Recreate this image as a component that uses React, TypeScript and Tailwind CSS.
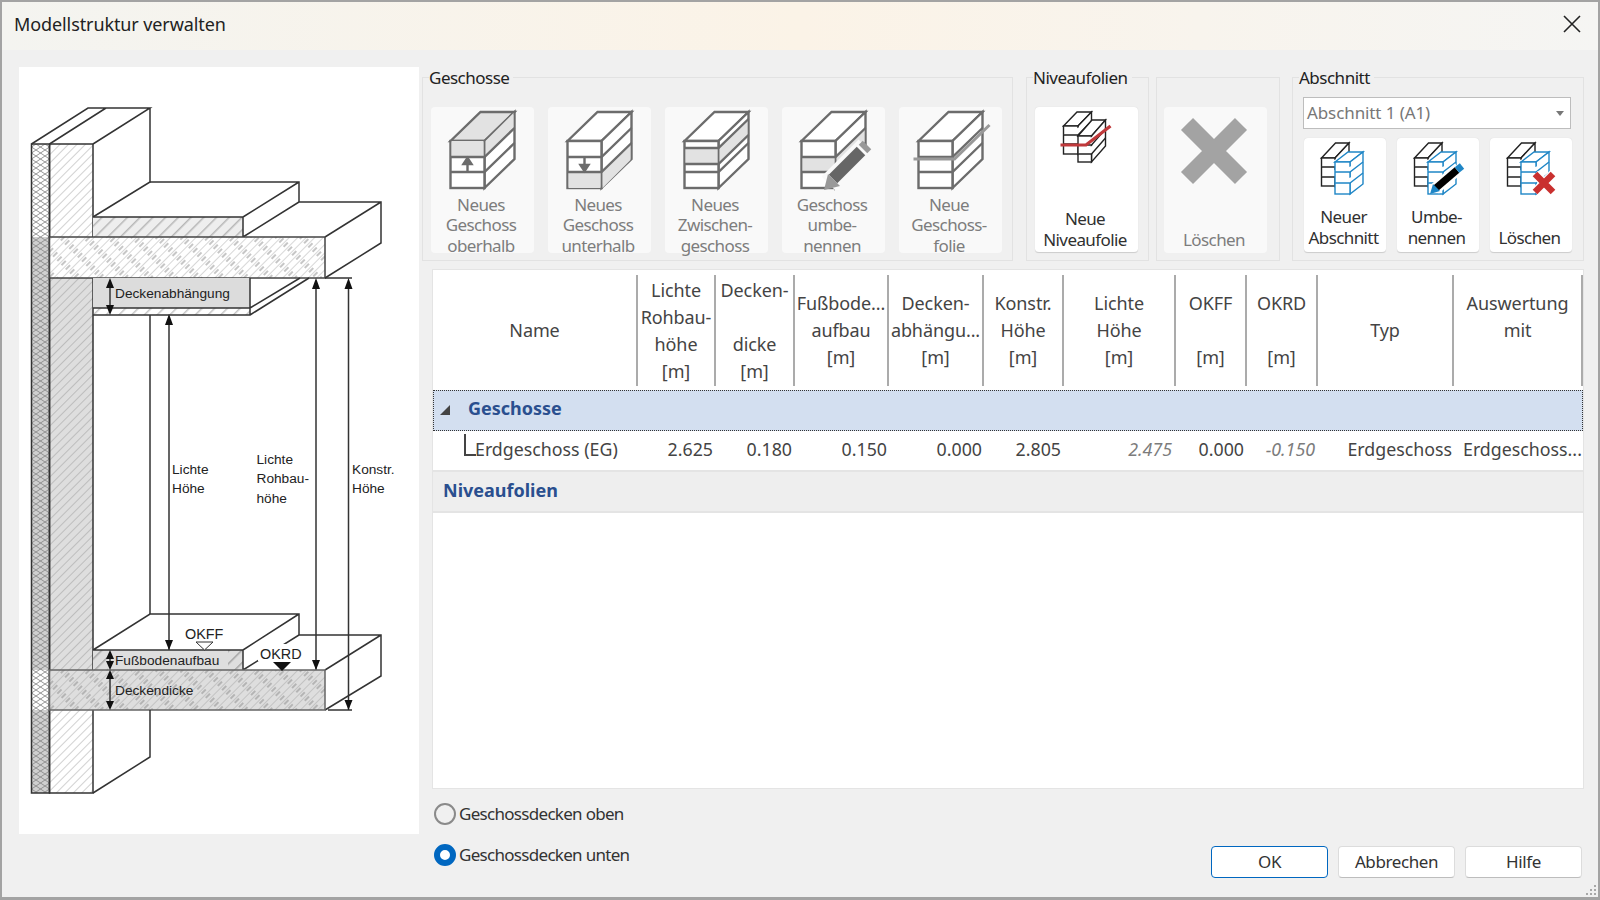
import type { ReactNode } from "react";

const columns = [
  { w: "w-[205px]", lines: ["Name"] },
  { w: "w-[78px]", lines: ["Lichte", "Rohbau-", "höhe", "[m]"] },
  { w: "w-[79px]", lines: ["Decken-", "\u00a0", "dicke", "[m]"] },
  { w: "w-[94px]", lines: ["Fußbode...", "aufbau", "[m]"] },
  { w: "w-[95px]", lines: ["Decken-", "abhängu...", "[m]"] },
  { w: "w-[80px]", lines: ["Konstr.", "Höhe", "[m]"] },
  { w: "w-[112px]", lines: ["Lichte", "Höhe", "[m]"] },
  { w: "w-[71px]", lines: ["OKFF", "\u00a0", "[m]"] },
  { w: "w-[71px]", lines: ["OKRD", "\u00a0", "[m]"] },
  { w: "w-[136px]", lines: ["Typ"] },
  { w: "w-[129px]", lines: ["Auswertung", "mit", "\u00a0"] },
];

function StackIcon({
  topFill = "#fff",
  rows = [49, 64],
  bands = [],
  children,
}: {
  topFill?: string;
  rows?: number[];
  bands?: [number, number][];
  children?: ReactNode;
}) {
  return (
    <svg viewBox="0 0 70 82" className="h-[82px] w-[70px] overflow-visible" fill="none" stroke="#6c6c6c" strokeWidth="2.4">
      <path d="M2.5 33 32.5 4H66.5L36.5 33Z" fill={topFill} />
      <path d="M36.5 33 66.5 4V51L36.5 80Z" fill="#fff" />
      <rect x="2.5" y="33" width="34" height="47" fill="#fff" />
      {bands.map(([a, b]) => (
        <g key={a} fill="#e2e2e2" stroke="none">
          <rect x="3.5" y={a} width="32" height={b - a} />
          <path d={`M37.5 ${a} 65.5 ${a - 28}V${b - 28}L37.5 ${b}Z`} />
        </g>
      ))}
      {rows.map((y) => (
        <path key={y} d={`M2.5 ${y}H36.5L66.5 ${y - 29}`} />
      ))}
      {children}
    </svg>
  );
}

function MiniBox({ x, y, w, h, dx, dy, rows, color }: { x: number; y: number; w: number; h: number; dx: number; dy: number; rows: number[]; color: string }) {
  return (
    <g stroke={color} strokeWidth="1.4" fill="#fff">
      <path d={`M${x} ${y}l${dx} ${-dy}h${w}l${-dx} ${dy}Z`} />
      <path d={`M${x + w} ${y}l${dx} ${-dy}v${h}l${-dx} ${dy}Z`} />
      <rect x={x} y={y} width={w} height={h} />
      {rows.map((r) => (
        <path key={r} d={`M${x} ${r}h${w}l${dx} ${-dy}`} />
      ))}
    </g>
  );
}

function SectionIcon({ children }: { children?: ReactNode }) {
  return (
    <svg viewBox="0 0 50 56" className="h-[56px] w-[50px] overflow-visible">
      <MiniBox x={1.5} y={17} w={13.5} h={28} dx={14} dy={15} rows={[26, 36]} color="#222" />
      <MiniBox x={15} y={21} w={15} h={32} dx={13} dy={10} rows={[31, 42]} color="#1f86c6" />
      {children}
    </svg>
  );
}

function ToolButton({
  lines,
  icon,
  disabled,
  className,
  textClass = "",
}: {
  lines: string[];
  icon: ReactNode;
  disabled?: boolean;
  className: string;
  textClass?: string;
}) {
  return (
    <div
      className={`flex flex-col items-center justify-between rounded-[4px] pt-px ${className} ${
        disabled ? "bg-[#f9f9f9] text-[#7d7d7d]" : "border-b border-[#cfcfcf] bg-white text-[#303030] shadow-[0_0_1px_#cfcfcf]"
      }`}
    >
      {icon}
      <div className={`pr-[3px] text-center text-[17px] leading-[20.5px] tracking-[-0.6px] ${textClass}`}>
        {lines.map((l) => (
          <div key={l} className="whitespace-nowrap">{l}</div>
        ))}
      </div>
    </div>
  );
}

function Group({ label, className, children }: { label?: string; className: string; children: ReactNode }) {
  return (
    <div className={`relative h-[184px] border border-[#e2e2e2] ${className}`}>
      {label ? (
        <span className="absolute -top-[12px] left-[6px] bg-[#f0f0f0] pr-1 text-[17px] leading-[24px] tracking-[-0.5px] text-[#222]">{label}</span>
      ) : null}
      {children}
    </div>
  );
}

function Diagram() {
  const line = { stroke: "#333", strokeWidth: 1.5, fill: "none" };
  return (
    <svg viewBox="19 67 400 767" className="h-[767px] w-[400px]" style={{ fontFamily: '"Liberation Sans", Arial, sans-serif' }}>
      <defs>
        <pattern id="hatch" width="6" height="7" patternUnits="userSpaceOnUse" patternTransform="rotate(45)">
          <line x1="0" y1="0" x2="0" y2="7" stroke="#8c8c8c" strokeWidth="0.8" />
        </pattern>
        <pattern id="hatchDash" width="6" height="17" patternUnits="userSpaceOnUse" patternTransform="rotate(45)">
          <line x1="0" y1="0" x2="0" y2="17" stroke="#9c9c9c" strokeWidth="0.8" />
          <line x1="3" y1="2" x2="3" y2="8" stroke="#808080" strokeWidth="0.9" />
        </pattern>
        <pattern id="hatchWide" width="9" height="9" patternUnits="userSpaceOnUse" patternTransform="rotate(45)">
          <line x1="0" y1="0" x2="0" y2="9" stroke="#8a8a8a" strokeWidth="3" />
        </pattern>
        <pattern id="cross" width="9" height="6" patternUnits="userSpaceOnUse">
          <path d="M0 0 9 6M9 0 0 6" stroke="#8a8a8a" strokeWidth="0.9" />
        </pattern>
      </defs>

      {/* insulation strip */}
      <rect x="31.5" y="144" width="18" height="649" fill="#fff" />
      <rect x="31.5" y="237" width="18" height="433" fill="#d0d0d0" />
      <rect x="31.5" y="710" width="18" height="83" fill="#d0d0d0" />
      <rect x="31.5" y="144" width="18" height="649" fill="url(#cross)" />
      {/* wall */}
      <rect x="49.5" y="278" width="43.5" height="392" fill="#dedede" />
      <rect x="49.5" y="144" width="43.5" height="649" fill="url(#hatch)" />
      <rect x="31.5" y="144" width="18" height="649" {...line} />
      <path d="M49.5 144H93V237M93 278V670M93 710V793H49.5V144" {...line} />
      <path d="M31.5 144 88 108H150L93 144M49.5 144 106 108M150 108V182L93 217" {...line} />
      {/* upper floor */}
      <rect x="93" y="217" width="150" height="20" fill="#eeeeee" />
      <rect x="93" y="217" width="150" height="20" fill="url(#hatchWide)" opacity="0.55" />
      <path d="M93 217H243V237M150 182H299V202L243 237M243 217 299 182M299 202H381V243L325 278M381 202 325 237" {...line} />
      <rect x="49.5" y="237" width="275.5" height="41" fill="#fff" />
      <rect x="49.5" y="237" width="275.5" height="41" fill="url(#hatchDash)" />
      <rect x="49.5" y="237" width="275.5" height="41" stroke="#444" strokeWidth="1.5" fill="none" />
      {/* suspended ceiling */}
      <rect x="93" y="278" width="157" height="30" fill="#dcdcdc" />
      <rect x="93" y="308" width="157" height="7" fill="url(#hatchWide)" opacity="0.5" />
      <path d="M93 308H250M93 315H250V278M250 315 309 278M250 308 300 278" {...line} />
      <path d="M325 278H352M328 710H352" {...line} />
      {/* dimension lines */}
      <path d="M150 315V614M169 320V650M316 284V670M348.5 284V710M110 284V310" {...line} />
      <path d="M169 314 165 325H173ZM316 278 312 289H320ZM348.5 278 344.5 289H352.5ZM110 278 106 288H114ZM110 315 106 305H114Z" fill="#111" />
      <path d="M169 650 165 640H173ZM316 670 312 660H320ZM348.5 710 344.5 700H352.5Z" fill="#111" />
      {/* lower floor */}
      <rect x="93" y="650" width="150" height="20" fill="#dedede" />
      <path d="M93 650H108V670H93ZM228 650H243V670H228Z" fill="url(#hatchWide)" opacity="0.7" />
      <path d="M93 650 150 614H299V635L243 670M93 650H243V670M243 650 299 614M299 635H381V676L325 710M381 635 325 670" {...line} />
      <rect x="49.5" y="670" width="275.5" height="40" fill="#dedede" />
      <rect x="49.5" y="670" width="275.5" height="40" fill="url(#hatchDash)" />
      <rect x="49.5" y="670" width="275.5" height="40" stroke="#666" strokeWidth="1.5" fill="none" />
      <path d="M150 710V757L93 793" {...line} />
      <path d="M110 652V668M110 674V706" {...line} />
      <path d="M110 650 106 659H114ZM110 670 106 661H114ZM110 670 106 679H114ZM110 710 106 701H114Z" fill="#111" />
      {/* level marks */}
      <rect x="258" y="644" width="43" height="17" fill="#fff" />
      <path d="M196 642H213L204.5 650Z" fill="#fff" stroke="#333" strokeWidth="1" />
      <path d="M273 662H291L282 671Z" fill="#111" />
      <g fill="#222" fontSize="13.7">
        <text x="115" y="298">Deckenabhängung</text>
        <text x="172" y="474">Lichte</text>
        <text x="172" y="493">Höhe</text>
        <text x="256.5" y="464">Lichte</text>
        <text x="256.5" y="483">Rohbau-</text>
        <text x="256.5" y="503">höhe</text>
        <text x="352" y="474">Konstr.</text>
        <text x="352" y="493">Höhe</text>
        <text x="115" y="665">Fußbodenaufbau</text>
        <text x="115" y="695">Deckendicke</text>
        <text x="185" y="639" fontSize="14.4">OKFF</text>
        <text x="260" y="659" fontSize="14.4">OKRD</text>
      </g>
    </svg>
  );
}

export default function App() {
  return (
    <div className="relative flex h-[900px] w-[1600px] flex-col overflow-hidden border-2 border-b-[3px] border-[#a3a3a3] bg-[#f0f0f0] text-[#333]" style={{ fontFamily: '"Noto Sans", "Open Sans", sans-serif' }}>
      <div className="flex h-[48px] shrink-0 items-center justify-between bg-gradient-to-r from-[#f4f4f0] via-[#fbf3e7] to-[#f5f5f3] pb-[5px] pl-[12px] pr-[17px]">
        <span className="text-[18px] leading-none tracking-[-0.1px] text-[#222]">Modellstruktur verwalten</span>
        <svg viewBox="0 0 18 18" className="h-[18px] w-[18px]" stroke="#222" strokeWidth="1.6">
          <path d="M1 1 17 17M17 1 1 17" />
        </svg>
      </div>

      <div className="flex pl-[17px] pt-[17px]">
        <div className="h-[767px] w-[400px] shrink-0 bg-white">
          <Diagram />
        </div>

        <div className="ml-[3px] w-[1162px] pt-[10px]">
          <div className="flex">
            <Group label="Geschosse" className="w-[591px] pl-[8px] pt-[29px]">
              <div className="flex gap-[14px]">
                <ToolButton
                  disabled
                  className="h-[146px] w-[103px]"
                  textClass="-mb-[3px]"
                  lines={["Neues", "Geschoss", "oberhalb"]}
                  icon={
                    <StackIcon topFill="#e2e2e2" bands={[[33, 49]]}>
                      <path d="M19.5 64V51M15.5 56 19.5 50 23.5 56Z" fill="#6f6f6f" />
                    </StackIcon>
                  }
                />
                <ToolButton
                  disabled
                  className="h-[146px] w-[103px]"
                  textClass="-mb-[3px]"
                  lines={["Neues", "Geschoss", "unterhalb"]}
                  icon={
                    <StackIcon bands={[[64, 80]]}>
                      <path d="M19.5 49V62M15.5 57 19.5 63 23.5 57Z" fill="#6f6f6f" />
                    </StackIcon>
                  }
                />
                <ToolButton
                  disabled
                  className="h-[146px] w-[103px]"
                  textClass="-mb-[3px]"
                  lines={["Neues", "Zwischen-", "geschoss"]}
                  icon={<StackIcon rows={[40, 56, 64]} bands={[[40, 56]]} />}
                />
                <ToolButton
                  disabled
                  className="h-[146px] w-[103px]"
                  textClass="-mb-[3px]"
                  lines={["Geschoss", "umbe-", "nennen"]}
                  icon={
                    <StackIcon bands={[[49, 64]]}>
                      <path d="M30 76 67 39" stroke="#f9f9f9" strokeWidth="21" />
                      <path d="M34 71 62 43" stroke="#666" strokeWidth="12" />
                      <path d="M64 41 68 37" stroke="#999" strokeWidth="12" />
                      <path d="M25 82 29 66 41 78Z" fill="#999" stroke="none" />
                    </StackIcon>
                  }
                />
                <ToolButton
                  disabled
                  className="h-[146px] w-[103px]"
                  textClass="-mb-[3px]"
                  lines={["Neue", "Geschoss-", "folie"]}
                  icon={
                    <StackIcon>
                      <path d="M-2.5 51H38.5L73.5 17" stroke="#999" strokeWidth="3" />
                    </StackIcon>
                  }
                />
              </div>
            </Group>

            <Group label="Niveaufolien" className="ml-[13px] w-[123px] pl-[8px] pt-[29px]">
              <ToolButton
                className="h-[146px] w-[103px] pb-[2px]"
                lines={["Neue", "Niveaufolie"]}
                icon={
                  <svg viewBox="0 0 70 60" className="h-[60px] w-[70px] overflow-visible">
                    <MiniBox x={11.5} y={18} w={14.5} h={28} dx={13.5} dy={14} rows={[27, 36]} color="#222" />
                    <MiniBox x={26} y={28} w={13.5} h={26} dx={14} dy={16} rows={[37, 46]} color="#222" />
                    <path d="M8.5 37H34L58.5 18" fill="none" stroke="#c0393b" strokeWidth="3.2" />
                  </svg>
                }
              />
            </Group>

            <Group className="ml-[7px] w-[124px] pl-[7px] pt-[29px]">
              <ToolButton
                disabled
                className="h-[146px] w-[103px] pb-[3px]"
                lines={["Löschen"]}
                icon={
                  <svg viewBox="0 0 103 80" className="h-[80px] w-[103px]">
                    <path d="M23 16 77 70M77 16 23 70" stroke="#a3a3a3" strokeWidth="17" />
                  </svg>
                }
              />
            </Group>

            <Group label="Abschnitt" className="ml-[12px] w-[292px] pl-[10px] pt-[19px]">
              <div className="flex h-[32px] w-[268px] items-center justify-between border border-[#bdbdbd] bg-white pl-[3px] pr-[6px] text-[17px] tracking-[-0.1px] text-[#777]">
                <span>Abschnitt 1 (A1)</span>
                <svg viewBox="0 0 8 5" className="h-[5px] w-[8px]" fill="#777">
                  <path d="M0 0H8L4 5Z" />
                </svg>
              </div>
              <div className="ml-px mt-[9px] flex gap-[11px]">
                <ToolButton className="h-[115px] w-[82px] pb-[4px]" lines={["Neuer", "Abschnitt"]} icon={<div className="pt-[2px]"><SectionIcon /></div>} />
                <ToolButton
                  className="h-[115px] w-[82px] pb-[4px]"
                  lines={["Umbe-", "nennen"]}
                  icon={
                    <div className="pt-[2px]">
                      <SectionIcon>
                        <path d="M22 48 46 27" stroke="#fff" strokeWidth="12" />
                        <path d="M23 47 44 29" stroke="#000" strokeWidth="7" />
                        <path d="M44 29 49 25" stroke="#1f86c6" strokeWidth="7" />
                        <path d="M17 53 20 43 27 50Z" fill="#1f86c6" />
                      </SectionIcon>
                    </div>
                  }
                />
                <ToolButton
                  className="h-[115px] w-[82px] pb-[4px]"
                  lines={["Löschen"]}
                  icon={
                    <div className="pt-[2px]">
                      <SectionIcon>
                        <path d="M29 33 47 51M47 33 29 51" stroke="#fff" strokeWidth="9" />
                        <path d="M29 33 47 51M47 33 29 51" stroke="#c9302f" strokeWidth="6.5" />
                      </SectionIcon>
                    </div>
                  }
                />
              </div>
            </Group>
          </div>

          <div className="ml-[10px] mt-[8px] h-[520px] w-[1152px] border border-[#e4e4e4] bg-white">
            <div className="flex h-[120px] pt-[5px] text-[18px] leading-[27px] tracking-[-0.1px] text-[#444]">
              {columns.map((c) => (
                <div key={c.lines.join()} className={`flex h-[111px] shrink-0 flex-col items-center justify-center border-r-2 border-[#ababab] ${c.w}`}>
                  {c.lines.map((l, i) => (
                    <div key={i} className="whitespace-nowrap">{l}</div>
                  ))}
                </div>
              ))}
            </div>
            <div className="flex h-[41px] items-center border border-dotted border-[#333] bg-[#d3dff0] pb-[5px]">
              <svg viewBox="0 0 10 10" className="ml-[6px] mt-[3px] h-[10px] w-[10px]" fill="#444">
                <path d="M10 0V10H0Z" />
              </svg>
              <span className="ml-[18px] text-[18px] font-bold text-[#2a4f8f]">Geschosse</span>
            </div>
            <div className="relative flex h-[41px] items-center border-b-2 border-[#e4e4e4] pb-[3px] text-[17.8px] text-[#444]">
              <span className="absolute left-[31px] top-[3px] h-[22px] w-[12px] border-b-2 border-l-2 border-[#444]" />
              <span className="ml-[42px] w-[160px] whitespace-nowrap">Erdgeschoss (EG)</span>
              <span className="w-[78px] text-right">2.625</span>
              <span className="w-[79px] text-right">0.180</span>
              <span className="w-[95px] text-right">0.150</span>
              <span className="w-[95px] text-right">0.000</span>
              <span className="w-[79px] text-right">2.805</span>
              <span className="w-[111px] text-right italic text-[#7c7c7c]">2.475</span>
              <span className="w-[72px] text-right">0.000</span>
              <span className="w-[71px] text-right italic text-[#7c7c7c]">-0.150</span>
              <span className="w-[137px] text-right">Erdgeschoss</span>
              <span className="ml-[11px] whitespace-nowrap">Erdgeschoss...</span>
            </div>
            <div className="flex h-[41px] items-center border-b-2 border-[#e4e4e4] bg-[#eeeeee] pb-[3px] pl-[10px] text-[18px] font-bold text-[#2a4f8f]">
              Niveaufolien
            </div>
          </div>

          <div className="flex h-[89px] items-end justify-between pr-[2px]">
            <div className="ml-[12px] flex flex-col gap-[19px] self-start pt-[14px] text-[17px] leading-[22px] tracking-[-0.7px] text-[#333]">
              <div className="flex items-center gap-[3px]">
                <span className="h-[22px] w-[22px] rounded-full border-2 border-[#8a8a8a]" />
                Geschossdecken oben
              </div>
              <div className="flex items-center gap-[3px]">
                <span className="h-[22px] w-[22px] rounded-full border-[6px] border-[#0067c0] bg-white" />
                Geschossdecken unten
              </div>
            </div>
            <div className="flex gap-[10px] text-[17px] tracking-[-0.4px] text-[#333]">
              <div className="flex h-[32px] w-[117px] items-center justify-center rounded-[4px] border border-[#0067c0] bg-white">OK</div>
              <div className="flex h-[32px] w-[117px] items-center justify-center rounded-[4px] border border-[#dcdcdc] border-b-[#bdbdbd] bg-white">Abbrechen</div>
              <div className="flex h-[32px] w-[117px] items-center justify-center rounded-[4px] border border-[#dcdcdc] border-b-[#bdbdbd] bg-white">Hilfe</div>
            </div>
          </div>
        </div>
      </div>

      <svg viewBox="0 0 12 12" className="absolute bottom-[1px] right-[1px] h-[12px] w-[12px]" fill="#a8a8a8">
        <path d="M9 1h2v2H9ZM5 5h2v2H5ZM9 5h2v2H9ZM1 9h2v2H1ZM5 9h2v2H5ZM9 9h2v2H9Z" />
      </svg>
    </div>
  );
}
